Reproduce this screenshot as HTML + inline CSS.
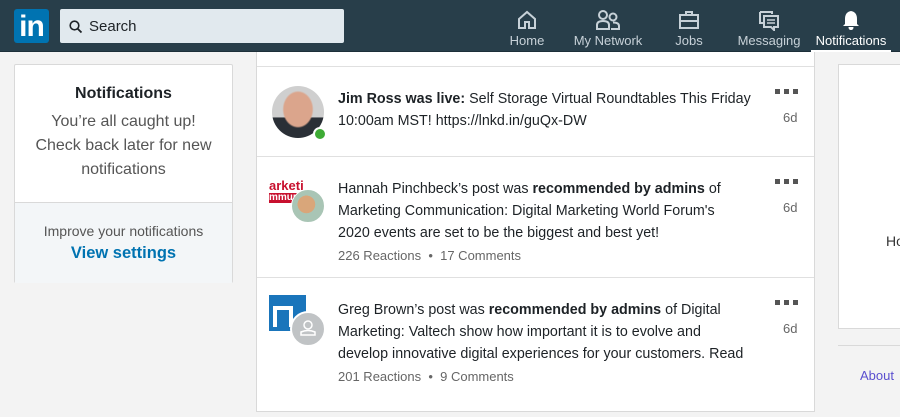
<!DOCTYPE html><html><head><style>
*{margin:0;padding:0;box-sizing:border-box}
body{width:900px;height:400px;overflow:hidden;background:#f3f3f3;font-family:"Liberation Sans",Arial,sans-serif;position:relative;color:#000}
.hdr{position:absolute;left:0;top:0;width:900px;height:52px;background:#283e4a;border-bottom:1px solid #1d2f39}
.logo{position:absolute;left:14px;top:9px;width:35px;height:34px;background:#0073b1;border-radius:3px;color:#fff;font-weight:bold;font-size:30px;line-height:36px;text-align:center;letter-spacing:-1px}
.search{position:absolute;left:60px;top:9px;width:284px;height:34px;background:#e1e9ee;border-radius:2px;font-size:15px;color:#1d2226;line-height:36px;padding-left:29px}
.nav{position:absolute;top:0;text-align:center;color:#c7d1d8;font-size:13px}
.nav svg{display:block;margin:9px auto 0}
.nav span{display:block;margin-top:2px}
.card{position:absolute;background:#fff;border:1px solid #d9d9d9;}
.row{position:absolute;left:0;width:557px;border-top:1px solid #e0e0e0}
.txt{position:absolute;left:81px;font-size:14.3px;line-height:22px;color:#1d2226}
.meta{position:absolute;left:81px;font-size:13px;color:#666}
.dots{position:absolute;left:518px;top:22px;width:24px;height:5px}
.dots i{position:absolute;top:0;width:5px;height:5px;background:#555}
.d{position:absolute;left:526px;font-size:13px;color:#666}
.av{position:absolute;border-radius:50%}
</style></head><body>
<div class="hdr">
<div class="logo">in</div>
<div class="search"><svg style="position:absolute;left:9px;top:11px" width="14" height="14" viewBox="0 0 14 14"><circle cx="5.5" cy="5.5" r="4.3" fill="none" stroke="#1d2226" stroke-width="1.6"/><path d="M8.7 8.7L12.5 12.5" stroke="#1d2226" stroke-width="1.8"/></svg>Search</div>
<div class="nav" style="left:503px;width:48px"><svg width="22" height="22" viewBox="0 0 22 22"><path d="M3 10L11 3L19 10V19H13V13H9V19H3Z" fill="none" stroke="#c7d1d8" stroke-width="2"/></svg><span>Home</span></div>
<div class="nav" style="left:568px;width:80px"><svg width="26" height="22" viewBox="0 0 26 22"><circle cx="8" cy="6" r="4" fill="none" stroke="#c7d1d8" stroke-width="2"/><path d="M2 20V16Q2 12 8 12Q14 12 14 16V20Z" fill="none" stroke="#c7d1d8" stroke-width="2"/><circle cx="18" cy="8" r="3.5" fill="none" stroke="#c7d1d8" stroke-width="2"/><path d="M16 20H24V17Q24 13.5 18 13.5" fill="none" stroke="#c7d1d8" stroke-width="2"/></svg><span>My Network</span></div>
<div class="nav" style="left:668px;width:42px"><svg width="22" height="22" viewBox="0 0 22 22"><rect x="2" y="6" width="18" height="13" fill="none" stroke="#c7d1d8" stroke-width="2"/><path d="M8 6V3H14V6M2 12H20" fill="none" stroke="#c7d1d8" stroke-width="2"/></svg><span>Jobs</span></div>
<div class="nav" style="left:735px;width:68px"><svg width="22" height="22" viewBox="0 0 22 22"><path d="M2 3H14V5M2 3V14H5" fill="none" stroke="#c7d1d8" stroke-width="2"/><path d="M6 7H20V18H16V21L13 18H6Z" fill="none" stroke="#c7d1d8" stroke-width="2"/><path d="M9 11H17M9 14H17" stroke="#c7d1d8" stroke-width="1.6"/></svg><span>Messaging</span></div>
<div class="nav" style="left:811px;width:80px;color:#fff;border-bottom:2px solid #fff;height:52px"><svg width="22" height="22" viewBox="0 0 22 22"><path d="M11 2Q5 3 5 10V15L3 17H19L17 15V10Q17 3 11 2Z M8.5 18H13.5Q13.5 21 11 21Q8.5 21 8.5 18Z" fill="#fff"/></svg><span>Notifications</span></div>
</div>

<div class="card" style="left:14px;top:64px;width:219px;height:219px;border-radius:2px">
<div style="text-align:center;font-size:16px;font-weight:bold;margin-top:20px;color:#1d2226">Notifications</div>
<div style="text-align:center;font-size:16px;line-height:24px;margin-top:7px;color:#555">You’re all caught up!<br>Check back later for new<br>notifications</div>
<div style="position:absolute;left:0;top:137px;width:217px;height:81px;background:#f3f6f8;border-top:1px solid #d9d9d9;text-align:center">
<div style="font-size:14px;color:#555;margin-top:20px">Improve your notifications</div>
<div style="font-size:16.5px;color:#0073b1;font-weight:bold;margin-top:5px">View settings</div></div>
</div>

<div class="card" style="left:256px;top:52px;width:559px;height:360px;border-top:none">
<div class="row" style="top:14px;height:90px">
<div class="av" style="left:15px;top:19px;width:52px;height:52px;background:radial-gradient(ellipse 30% 36% at 50% 45%,#dba58c 0 90%,transparent 100%),linear-gradient(#cfcfcf 0 60%,#2a2f36 61%)"></div>
<div class="av" style="left:56px;top:60px;width:14px;height:14px;background:#3eab35;border:2px solid #fff"></div>
<div class="txt" style="top:21px"><b>Jim Ross was live:</b> Self Storage Virtual Roundtables This Friday<br>10:00am MST! https://lnkd.in/guQx-DW</div>
<div class="dots"><i style="left:0"></i><i style="left:9px"></i><i style="left:18px"></i></div><div class="d" style="top:43px">6d</div>
</div>
<div class="row" style="top:104px;height:121px">
<div style="position:absolute;left:12px;top:21px;width:38px;height:26px;color:#c8102e;font-size:13px;font-weight:bold;overflow:hidden">arketi<div style="background:#c8102e;color:#fff;font-size:10px;height:10px;line-height:10px">mmun</div></div>
<div class="av" style="left:34px;top:32px;width:34px;height:34px;background:radial-gradient(circle at 45% 45%,#d9a67a 0 35%,#a9c5b5 36%);border:1px solid #fff"></div>
<div class="txt" style="top:21px">Hannah Pinchbeck’s post was <b>recommended by admins</b> of<br>Marketing Communication: Digital Marketing World Forum's<br>2020 events are set to be the biggest and best yet!</div>
<div class="meta" style="top:91px">226 Reactions &nbsp;•&nbsp; 17 Comments</div>
<div class="dots"><i style="left:0"></i><i style="left:9px"></i><i style="left:18px"></i></div><div class="d" style="top:43px">6d</div>
</div>
<div class="row" style="top:225px;height:140px">
<div style="position:absolute;left:12px;top:17px;width:37px;height:36px;background:#1a75bb"><div style="position:absolute;left:4px;top:11px;width:20px;height:21px;border:4px solid #fff;border-bottom:none"></div></div>
<div class="av" style="left:33px;top:33px;width:36px;height:36px;background:#c0c3c5;border:2px solid #fff"><svg width="32" height="32" viewBox="0 0 32 32"><circle cx="16" cy="12" r="4" fill="none" stroke="#fff" stroke-width="1.5"/><path d="M9 22V19Q16 16 23 19V22Z" fill="none" stroke="#fff" stroke-width="1.5"/></svg></div>
<div class="txt" style="top:21px">Greg Brown’s post was <b>recommended by admins</b> of Digital<br>Marketing: Valtech show how important it is to evolve and<br>develop innovative digital experiences for your customers. Read</div>
<div class="meta" style="top:91px">201 Reactions &nbsp;•&nbsp; 9 Comments</div>
<div class="dots"><i style="left:0"></i><i style="left:9px"></i><i style="left:18px"></i></div><div class="d" style="top:43px">6d</div>
</div>
</div>

<div class="card" style="left:838px;top:64px;width:80px;height:265px">
<div style="position:absolute;left:47px;top:168px;font-size:14px;color:#333">Ho</div></div>
<div style="position:absolute;left:838px;top:345px;width:62px;border-top:1px solid #d9d9d9"></div>
<div style="position:absolute;left:860px;top:368px;font-size:13px;color:#5a4fcf">About</div>
</body></html>
